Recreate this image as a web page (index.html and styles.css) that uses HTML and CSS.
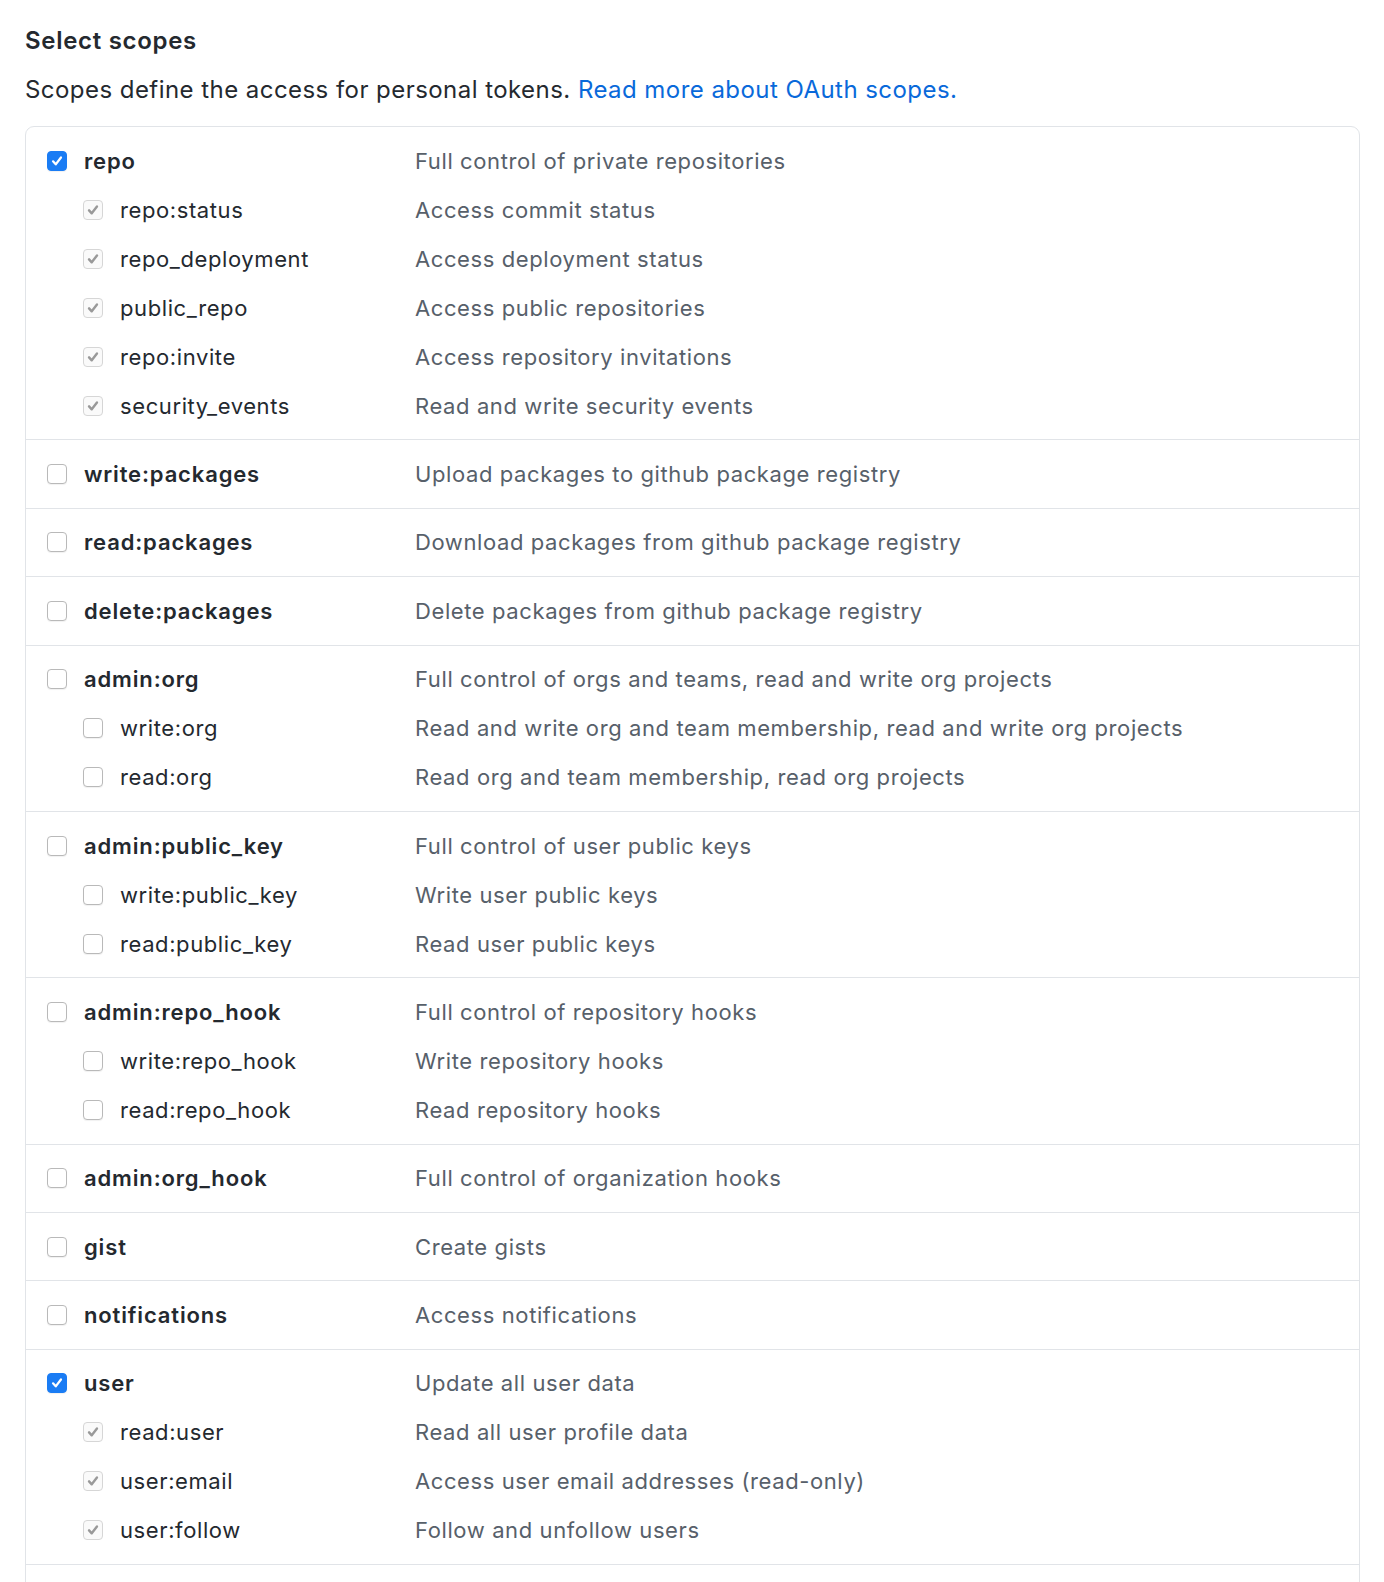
FILE: index.html
```html
<!DOCTYPE html>
<html lang="en">
<head>
    <meta charset="UTF-8">
    <meta name="viewport" content="width=device-width, initial-scale=1.0">
    <title>Select scopes</title>
    <link rel="stylesheet" href="styles.css">
</head>
<body>
<div class="scopes">
    <h3 class="scopes-title">Select scopes</h3>
    <p class="scopes-note">Scopes define the access for personal tokens. <a href="#">Read more about OAuth scopes.</a></p>

    <div class="scope-box">
        <div class="scope-group">
            <div class="scope-row">
                <label class="scope-name"><span class="check is-on"><svg viewBox="0 0 20 20"><path d="M5.6 10.4l3 3.3 5.8-7.6"/></svg></span>repo</label>
                <span class="scope-desc">Full control of private repositories</span>
            </div>
            <div class="scope-row sub">
                <label class="scope-name"><span class="check is-off"><svg viewBox="0 0 20 20"><path d="M5.6 10.4l3 3.3 5.8-7.6"/></svg></span>repo:status</label>
                <span class="scope-desc">Access commit status</span>
            </div>
            <div class="scope-row sub">
                <label class="scope-name"><span class="check is-off"><svg viewBox="0 0 20 20"><path d="M5.6 10.4l3 3.3 5.8-7.6"/></svg></span>repo_deployment</label>
                <span class="scope-desc">Access deployment status</span>
            </div>
            <div class="scope-row sub">
                <label class="scope-name"><span class="check is-off"><svg viewBox="0 0 20 20"><path d="M5.6 10.4l3 3.3 5.8-7.6"/></svg></span>public_repo</label>
                <span class="scope-desc">Access public repositories</span>
            </div>
            <div class="scope-row sub">
                <label class="scope-name"><span class="check is-off"><svg viewBox="0 0 20 20"><path d="M5.6 10.4l3 3.3 5.8-7.6"/></svg></span>repo:invite</label>
                <span class="scope-desc">Access repository invitations</span>
            </div>
            <div class="scope-row sub">
                <label class="scope-name"><span class="check is-off"><svg viewBox="0 0 20 20"><path d="M5.6 10.4l3 3.3 5.8-7.6"/></svg></span>security_events</label>
                <span class="scope-desc">Read and write security events</span>
            </div>
        </div>

        <div class="scope-group">
            <div class="scope-row">
                <label class="scope-name"><span class="check"></span>write:packages</label>
                <span class="scope-desc">Upload packages to github package registry</span>
            </div>
        </div>

        <div class="scope-group">
            <div class="scope-row">
                <label class="scope-name"><span class="check"></span>read:packages</label>
                <span class="scope-desc">Download packages from github package registry</span>
            </div>
        </div>

        <div class="scope-group">
            <div class="scope-row">
                <label class="scope-name"><span class="check"></span>delete:packages</label>
                <span class="scope-desc">Delete packages from github package registry</span>
            </div>
        </div>

        <div class="scope-group">
            <div class="scope-row">
                <label class="scope-name"><span class="check"></span>admin:org</label>
                <span class="scope-desc">Full control of orgs and teams, read and write org projects</span>
            </div>
            <div class="scope-row sub">
                <label class="scope-name"><span class="check"></span>write:org</label>
                <span class="scope-desc">Read and write org and team membership, read and write org projects</span>
            </div>
            <div class="scope-row sub">
                <label class="scope-name"><span class="check"></span>read:org</label>
                <span class="scope-desc">Read org and team membership, read org projects</span>
            </div>
        </div>

        <div class="scope-group">
            <div class="scope-row">
                <label class="scope-name"><span class="check"></span>admin:public_key</label>
                <span class="scope-desc">Full control of user public keys</span>
            </div>
            <div class="scope-row sub">
                <label class="scope-name"><span class="check"></span>write:public_key</label>
                <span class="scope-desc">Write user public keys</span>
            </div>
            <div class="scope-row sub">
                <label class="scope-name"><span class="check"></span>read:public_key</label>
                <span class="scope-desc">Read user public keys</span>
            </div>
        </div>

        <div class="scope-group">
            <div class="scope-row">
                <label class="scope-name"><span class="check"></span>admin:repo_hook</label>
                <span class="scope-desc">Full control of repository hooks</span>
            </div>
            <div class="scope-row sub">
                <label class="scope-name"><span class="check"></span>write:repo_hook</label>
                <span class="scope-desc">Write repository hooks</span>
            </div>
            <div class="scope-row sub">
                <label class="scope-name"><span class="check"></span>read:repo_hook</label>
                <span class="scope-desc">Read repository hooks</span>
            </div>
        </div>

        <div class="scope-group">
            <div class="scope-row">
                <label class="scope-name"><span class="check"></span>admin:org_hook</label>
                <span class="scope-desc">Full control of organization hooks</span>
            </div>
        </div>

        <div class="scope-group">
            <div class="scope-row">
                <label class="scope-name"><span class="check"></span>gist</label>
                <span class="scope-desc">Create gists</span>
            </div>
        </div>

        <div class="scope-group">
            <div class="scope-row">
                <label class="scope-name"><span class="check"></span>notifications</label>
                <span class="scope-desc">Access notifications</span>
            </div>
        </div>

        <div class="scope-group">
            <div class="scope-row">
                <label class="scope-name"><span class="check is-on"><svg viewBox="0 0 20 20"><path d="M5.6 10.4l3 3.3 5.8-7.6"/></svg></span>user</label>
                <span class="scope-desc">Update all user data</span>
            </div>
            <div class="scope-row sub">
                <label class="scope-name"><span class="check is-off"><svg viewBox="0 0 20 20"><path d="M5.6 10.4l3 3.3 5.8-7.6"/></svg></span>read:user</label>
                <span class="scope-desc">Read all user profile data</span>
            </div>
            <div class="scope-row sub">
                <label class="scope-name"><span class="check is-off"><svg viewBox="0 0 20 20"><path d="M5.6 10.4l3 3.3 5.8-7.6"/></svg></span>user:email</label>
                <span class="scope-desc">Access user email addresses (read-only)</span>
            </div>
            <div class="scope-row sub">
                <label class="scope-name"><span class="check is-off"><svg viewBox="0 0 20 20"><path d="M5.6 10.4l3 3.3 5.8-7.6"/></svg></span>user:follow</label>
                <span class="scope-desc">Follow and unfollow users</span>
            </div>
        </div>
    </div>
</div>
</body>
</html>
```

FILE: styles.css
```css
:root {
    --text-primary: #24292f;
    --text-secondary: #57606a;
    --link: #0969da;
    --border: #e1e4e8;
    --check-blue: #1a7cf4;
}

* {
    margin: 0;
    padding: 0;
    box-sizing: border-box;
}

body {
    font-family: Inter, "Noto Sans", "Liberation Sans", sans-serif;
    color: var(--text-primary);
    background: #fff;
}

.scopes {
    padding: 23px 24px 0 25px;
}

.scopes-title {
    font-size: 24px;
    line-height: 36px;
    font-weight: 600;
    letter-spacing: 0.7px;
}

.scopes-note {
    margin-top: 13px;
    font-size: 24px;
    line-height: 36px;
    letter-spacing: 0.45px;
}

.scopes-note a {
    color: var(--link);
    text-decoration: none;
}

/* the list keeps going below the fold */
.scope-box {
    margin-top: 18px;
    padding-bottom: 60px;
    border: 1px solid var(--border);
    border-radius: 9px;
}

.scope-group {
    display: flex;
    flex-direction: column;
    gap: 17px;
    padding: 17.7px 21px;
    border-bottom: 1px solid var(--border);
}

.scope-row {
    display: grid;
    grid-template-columns: 368px 1fr;
    font-size: 22px;
    line-height: 32px;
    letter-spacing: 0.6px;
}

.scope-name {
    display: flex;
    align-items: center;
    gap: 17px;
    font-weight: 600;
    letter-spacing: 0.85px;
}

.sub .scope-name {
    padding-left: 36px;
    font-weight: 400;
    letter-spacing: 0.6px;
}

.scope-desc {
    color: var(--text-secondary);
}

.check {
    flex: none;
    width: 20px;
    height: 20px;
    border: 1px solid #b9b9b9;
    border-radius: 4px;
    background: #fff;
    box-shadow: 0 1px 1px rgba(0, 0, 0, 0.06);
    display: flex;
    align-items: center;
    justify-content: center;
}

.check svg {
    width: 20px;
    height: 20px;
    fill: none;
    stroke-linecap: round;
    stroke-linejoin: round;
}

.check.is-on {
    background: var(--check-blue);
    border-color: var(--check-blue);
}

.check.is-on svg {
    stroke: #fff;
    stroke-width: 2.5;
}

.check.is-off {
    border-color: #d6d6d6;
    background: #fafafa;
    box-shadow: none;
}

.check.is-off svg {
    stroke: #999;
    stroke-width: 2.7;
}
```
